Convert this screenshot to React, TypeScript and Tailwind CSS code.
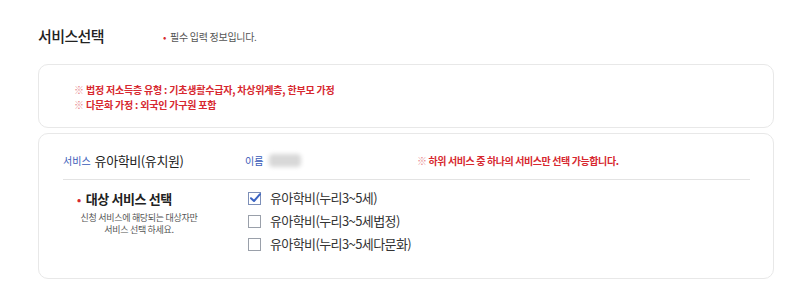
import React, { useState } from 'react';

const FONT = "font-['Noto_Sans_CJK_KR','Noto_Sans',sans-serif]";

function CheckBox({ checked }: { checked: boolean }) {
  return (
    <svg width="14" height="14" viewBox="0 0 14 14" className="shrink-0">
      <rect x="0.5" y="1.5" width="12" height="12" fill="#fff" stroke={checked ? '#7d8fb8' : '#9aa0aa'} strokeWidth="1" />
      {checked && (
        <path d="M3 7.2 L6 10 L12 3.2" fill="none" stroke="#3b64c4" strokeWidth="2" strokeLinecap="round" strokeLinejoin="round" />
      )}
    </svg>
  );
}

export default function App() {
  const [selected, setSelected] = useState(0);
  const options = ['유아학비(누리3~5세)', '유아학비(누리3~5세법정)', '유아학비(누리3~5세다문화)'];

  return (
    <div className={`w-[800px] h-[298px] bg-white pl-[38px] pt-[26px] ${FONT} text-[#222]`}>
      {/* Title */}
      <div className="flex items-center h-[20px]">
        <h2 className="text-[15px] font-medium tracking-[-0.6px] w-[125px]">서비스선택</h2>
        <p className="text-[10px] text-[#555] tracking-[-0.3px] flex items-center gap-1">
          <span className="text-[#d7282f]">•</span> 필수 입력 정보입니다.
        </p>
      </div>

      {/* Notice box */}
      <div className="mt-[18px] w-[736px] h-[64px] border border-[#e8e8e8] rounded-[10px] pl-[35px] pt-[17px] text-[10px] font-bold text-[#d7282f] tracking-[-0.2px] leading-[15px]">
        <p><span className="text-[#e88a8e] font-normal">※</span> 법정 저소득층 유형 : 기초생활수급자, 차상위계층, 한부모 가정</p>
        <p><span className="text-[#e88a8e] font-normal">※</span> 다문화 가정 : 외국인 가구원 포함</p>
      </div>

      {/* Service box */}
      <div className="mt-[5px] w-[736px] h-[146px] border border-[#e8e8e8] rounded-[10px] pl-[24px] pr-[23px]">
        <div className="grid grid-cols-[182px_172px_1fr] items-center h-[46px] pt-[8px] border-b border-[#e3e3e3]">
          <div className="flex items-center gap-[4px]">
            <span className="text-[10px] text-[#3a5bb8]">서비스</span>
            <span className="text-[13px] tracking-[-0.4px]">유아학비(유치원)</span>
          </div>
          <div className="flex items-center gap-[6px]">
            <span className="text-[10px] text-[#3a5bb8]">이름</span>
            <span className="inline-block w-[32px] h-[13px] bg-[#d8d8d8] blur-[2px] rounded-sm" />
          </div>
          <p className="text-[10px] font-bold text-[#d7282f] tracking-[-0.4px]">
            <span className="text-[#e88a8e] font-normal">※</span> 하위 서비스 중 하나의 서비스만 선택 가능합니다.
          </p>
        </div>

        <div className="grid grid-cols-[182px_1fr] pt-[9px]">
          <div className="pl-[14px]">
            <p className="text-[13px] font-bold tracking-[-0.4px] flex items-center gap-[5px]">
              <span className="text-[#d7282f] text-[11px]">•</span>대상 서비스 선택
            </p>
            <p className="w-[124px] mt-[3px] text-center text-[9px] leading-[12px] text-[#555] tracking-[-0.3px]">
              신청 서비스에 해당되는 대상자만
              <br />
              서비스 선택 하세요.
            </p>
          </div>
          <div className="flex flex-col gap-[5px] pl-[3px]">
            {options.map((o, i) => (
              <label key={o} className="flex items-center gap-[8px] h-[18px] cursor-pointer" onClick={() => setSelected(i)}>
                <CheckBox checked={selected === i} />
                <span className="text-[13px] tracking-[-0.6px] text-[#333]">{o}</span>
              </label>
            ))}
          </div>
        </div>
      </div>
    </div>
  );
}
